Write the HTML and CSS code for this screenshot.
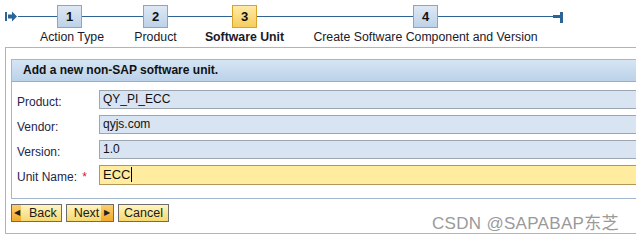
FILE: index.html
```html
<!DOCTYPE html>
<html>
<head>
    <meta charset="UTF-8">
    <title>Create Software Component</title>
    <link rel="stylesheet" href="styles.css">
</head>
<body>
    <div class="wizard">
        <svg class="wiz-start" width="13" height="11" viewBox="0 0 13 11">
            <rect x="0" y="1" width="2" height="9" fill="#2d6496"/>
            <polygon points="3,3.5 7,3.5 7,0.5 12,5.5 7,10.5 7,7.5 3,7.5" fill="#2d6496"/>
        </svg>
        <span class="wiz-line seg-1"></span>
        <div class="step">
            <div class="step-box">1</div>
            <div class="step-label first">Action Type</div>
        </div>
        <span class="wiz-line seg-2"></span>
        <div class="step">
            <div class="step-box">2</div>
            <div class="step-label">Product</div>
        </div>
        <span class="wiz-line seg-3"></span>
        <div class="step active">
            <div class="step-box">3</div>
            <div class="step-label">Software Unit</div>
        </div>
        <span class="wiz-line seg-4"></span>
        <div class="step">
            <div class="step-box">4</div>
            <div class="step-label">Create Software Component and Version</div>
        </div>
        <span class="wiz-line seg-5"></span>
        <svg class="wiz-end" width="10" height="11" viewBox="0 0 10 11">
            <rect x="0" y="3" width="7" height="3" fill="#2d6496"/>
            <rect x="7" y="0" width="3" height="11" fill="#2d6496"/>
        </svg>
    </div>

    <div class="panel">
        <div class="group">
            <div class="group-head">Add a new non-SAP software unit.</div>
            <div class="group-body">
                <div class="field">
                    <label class="field-label">Product:</label>
                    <div class="field-input">QY_PI_ECC</div>
                </div>
                <div class="field">
                    <label class="field-label">Vendor:</label>
                    <div class="field-input">qyjs.com</div>
                </div>
                <div class="field">
                    <label class="field-label">Version:</label>
                    <div class="field-input">1.0</div>
                </div>
                <div class="field">
                    <label class="field-label">Unit Name: <span class="req">*</span></label>
                    <div class="field-input edit">ECC<span class="caret"></span></div>
                </div>
            </div>
        </div>

        <div class="buttons">
            <button class="btn btn-back"><span class="btn-arrow">&#9664;</span><span class="btn-text">Back</span></button>
            <button class="btn btn-next"><span class="btn-text">Next</span><span class="btn-arrow">&#9654;</span></button>
            <button class="btn btn-cancel"><span class="btn-text">Cancel</span></button>
        </div>
    </div>

    <div class="watermark">CSDN @SAPABAP东芝</div>
</body>
</html>
```

FILE: styles.css
```css
* {
    margin: 0;
    padding: 0;
    box-sizing: border-box;
}

html,
body {
    overflow: hidden;
    background: #ffffff;
}

body {
    font-family: "Liberation Sans", Arial, sans-serif;
    font-size: 12px;
    color: #1c1c1c;
    width: 636px;
    height: 244px;
    position: relative;
}

/* wizard roadmap */

.wizard {
    display: flex;
    align-items: flex-start;
    height: 47px;
    padding-top: 5px;
    padding-left: 5px;
}

.wiz-start {
    margin-top: 6px;
}

.wiz-end {
    margin-top: 7px;
}

.wiz-line {
    height: 1px;
    margin-top: 11px;
    background: #2f6394;
}

.seg-1 { width: 39px; }
.seg-2 { width: 61px; }
.seg-3 { width: 64px; }
.seg-4 { width: 156px; }
.seg-5 { width: 115px; }

.step {
    display: flex;
    flex-direction: column;
    align-items: center;
    width: 25px;
}

.step-box {
    width: 25px;
    height: 23px;
    border: 1px solid #8da5c1;
    background: linear-gradient(#dde8f4, #bdd2e8);
    font-weight: bold;
    font-size: 13px;
    line-height: 21px;
    text-align: center;
    color: #111;
}

.step-label {
    margin-top: 2px;
    white-space: nowrap;
    line-height: 14px;
    font-size: 12.3px;
    color: #1a1a2a;
}

.step-label.first {
    margin-left: 5px;
}

.step.active .step-box {
    border-color: #d9a42a;
    background: linear-gradient(#ffeaa6, #f6cd5c);
}

.step.active .step-label {
    font-weight: bold;
}

/* main panel */

.panel {
    width: 700px;
    margin-left: 5px;
    border: 1px solid #a3b7ce;
    border-right: 0;
    padding: 11px 0 11px 5px;
}

.group {
    border: 1px solid #a3b7ce;
}

.group-head {
    height: 22px;
    padding-left: 11px;
    line-height: 21px;
    font-weight: bold;
    color: #111;
    background: linear-gradient(#d6e5f3, #bbd2e9);
    border-bottom: 1px solid #8eb1d2;
}

.group-body {
    display: flex;
    flex-direction: column;
    gap: 6px;
    padding: 8px 0 14px 5px;
}

.field {
    display: flex;
    height: 19px;
}

.field-label {
    width: 82px;
    padding-top: 5px;
    line-height: 14px;
    color: #25254a;
}

.req {
    color: #d0202a;
    margin-left: 2px;
}

.field-input {
    flex: 1;
    height: 19px;
    padding-left: 3px;
    line-height: 17px;
    color: #111;
    background: #d8e4f1;
    border: 1px solid #9ca5b0;
    border-right: 0;
}

.field-input.edit {
    height: 20px;
    line-height: 18px;
    font-size: 13px;
    background: #ffec9e;
    border-color: #b5965a;
}

.caret {
    display: inline-block;
    width: 1px;
    height: 15px;
    margin-left: 1px;
    vertical-align: -3px;
    background: #000;
}

/* buttons */

.buttons {
    display: flex;
    gap: 4px;
    margin-top: 5px;
}

.btn {
    display: flex;
    align-items: stretch;
    height: 18px;
    border: 1px solid #6c6c6c;
    background: linear-gradient(#fff5c2, #f6d86e);
    font-family: "Liberation Sans", Arial, sans-serif;
    font-size: 12.5px;
    color: #1a1a1a;
}

.btn-text {
    line-height: 16px;
}

.btn-back {
    width: 51px;
}

.btn-back .btn-text {
    padding-left: 8px;
}

.btn-next {
    width: 48px;
}

.btn-next .btn-text {
    flex: 1;
    padding-left: 5px;
}

.btn-cancel {
    width: 51px;
    justify-content: center;
}

.btn-arrow {
    width: 9px;
    font-size: 8px;
    line-height: 16px;
    text-align: center;
    color: #222;
    background: linear-gradient(#fbcf6d, #f3a92c);
}

.btn-next .btn-arrow {
    width: 12px;
}

.watermark {
    position: absolute;
    left: 432px;
    top: 209px;
    font-family: "Liberation Sans", "Noto Sans CJK SC", sans-serif;
    font-size: 17px;
    letter-spacing: 0.3px;
    color: #9a9a9a;
    text-shadow: 0 0 1px #fff;
}
```
